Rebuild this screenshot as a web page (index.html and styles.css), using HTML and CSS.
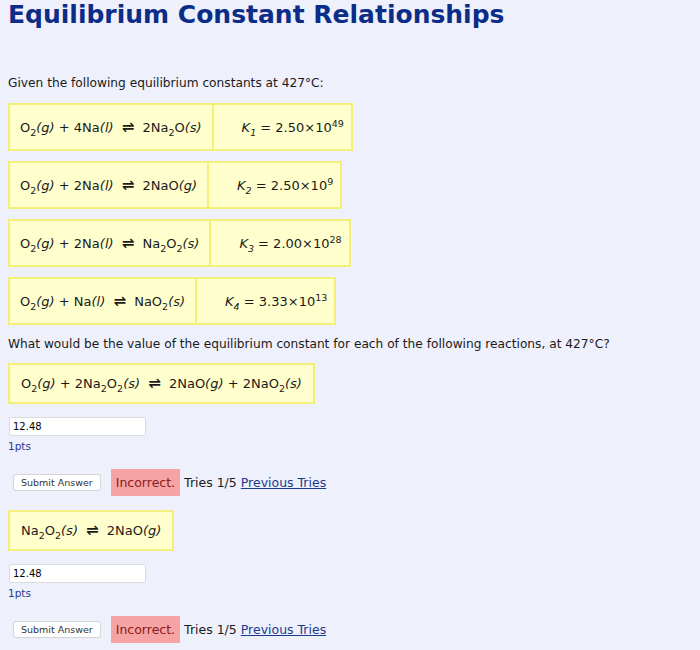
FILE: index.html
```html
<!DOCTYPE html>
<html>
<head>
<meta charset="utf-8">
<link rel="stylesheet" href="styles.css">
</head>
<body>
<h1 class="title">Equilibrium Constant Relationships</h1>
<p class="intro">Given the following equilibrium constants at 427°C:</p>

<table class="eq eq1"><tr>
<td class="rx">O<sub>2</sub><i>(g)</i> + 4Na<i>(l)</i> <span class="arr">⇌</span> 2Na<sub>2</sub>O<i>(s)</i></td>
<td class="k"><i>K<sub>1</sub></i> = 2.50×10<sup>49</sup></td>
</tr></table>

<table class="eq eq2"><tr>
<td class="rx">O<sub>2</sub><i>(g)</i> + 2Na<i>(l)</i> <span class="arr">⇌</span> 2NaO<i>(g)</i></td>
<td class="k"><i>K<sub>2</sub></i> = 2.50×10<sup>9</sup></td>
</tr></table>

<table class="eq eq3"><tr>
<td class="rx">O<sub>2</sub><i>(g)</i> + 2Na<i>(l)</i> <span class="arr">⇌</span> Na<sub>2</sub>O<sub>2</sub><i>(s)</i></td>
<td class="k"><i>K<sub>3</sub></i> = 2.00×10<sup>28</sup></td>
</tr></table>

<table class="eq eq4"><tr>
<td class="rx">O<sub>2</sub><i>(g)</i> + Na<i>(l)</i> <span class="arr">⇌</span> NaO<sub>2</sub><i>(s)</i></td>
<td class="k"><i>K<sub>4</sub></i> = 3.33×10<sup>13</sup></td>
</tr></table>

<p class="question">What would be the value of the equilibrium constant for each of the following reactions, at 427°C?</p>

<div class="part">
<div class="qbox">O<sub>2</sub><i>(g)</i> + 2Na<sub>2</sub>O<sub>2</sub><i>(s)</i> <span class="arr">⇌</span> 2NaO<i>(g)</i> + 2NaO<sub>2</sub><i>(s)</i></div>
<div class="answer"><input class="inp" type="text" value="12.48"></div>
<div class="pts">1pts</div>
<div class="row"><button class="btn">Submit Answer</button><span class="bad">Incorrect.</span><span class="tries">Tries 1/5 <a href="#" class="prev">Previous Tries</a></span></div>
</div>

<div class="part">
<div class="qbox qbox2">Na<sub>2</sub>O<sub>2</sub><i>(s)</i> <span class="arr">⇌</span> 2NaO<i>(g)</i></div>
<div class="answer"><input class="inp" type="text" value="12.48"></div>
<div class="pts">1pts</div>
<div class="row"><button class="btn">Submit Answer</button><span class="bad">Incorrect.</span><span class="tries">Tries 1/5 <a href="#" class="prev">Previous Tries</a></span></div>
</div>
</body>
</html>
```

FILE: styles.css
```css
html, body {
  margin: 0;
  background: #eef0fc;
}
body {
  padding: 0 8px;
  font-family: "DejaVu Sans", Verdana, sans-serif;
  color: #1a1a1a;
  font-size: 12px;
}
.title {
  margin: 0;
  font-size: 25px;
  line-height: 30px;
  font-weight: bold;
  color: #0b2d87;
}
.intro {
  margin: 45px 0 12px;
  font-size: 12.2px;
  line-height: 16px;
}
.eq {
  border-collapse: collapse;
  background: #ffffcd;
  border: 2px solid #f3ef7a;
  margin-bottom: 10px;
}
.eq td {
  height: 44px;
  padding: 0 10px;
  font-size: 13px;
  white-space: nowrap;
}
.eq td.rx {
  border-right: 2px solid #f3ef7a;
}
.eq td.k {
  padding: 0 7px 0 28px;
}
sub, sup {
  font-size: 9.5px;
  line-height: 0;
}
.arr {
  font-weight: bold;
  font-size: 15px;
  margin: 0 4px;
}
.question {
  margin: 12px 0 12px;
  font-size: 12.2px;
}
.qbox {
  display: inline-block;
  background: #ffffcd;
  border: 2px solid #f3ef7a;
  padding: 11px 11px;
  font-size: 13px;
  line-height: 15px;
}
.answer {
  margin-top: 13px;
}
.inp {
  width: 137px;
  height: 19px;
  padding: 0 3px;
  margin: 0 0 0 1px;
  border: 1px solid #dcdcdc;
  background: #fff;
  font-family: "DejaVu Sans", sans-serif;
  font-size: 10px;
  box-sizing: border-box;
  border-radius: 2px;
}
.pts {
  margin-top: 4px;
  font-size: 10.5px;
  color: #2a3b8f;
}
.row {
  display: flex;
  align-items: center;
  margin-top: 17px;
  margin-bottom: 14px;
}
.btn {
  margin-left: 5px;
  height: 17px;
  padding: 0 7px;
  background: #fff;
  border: 1px solid #d4d4d4;
  border-radius: 3px;
  font-family: "DejaVu Sans", sans-serif;
  font-size: 9.5px;
  color: #333;
}
.bad {
  margin-left: 10px;
  background: #f6a3a3;
  color: #8c1a1a;
  padding: 6px 5px;
  font-size: 12.5px;
}
.tries {
  margin-left: 4px;
  font-size: 12.5px;
}
.prev {
  color: #1b3a8f;
}
```
